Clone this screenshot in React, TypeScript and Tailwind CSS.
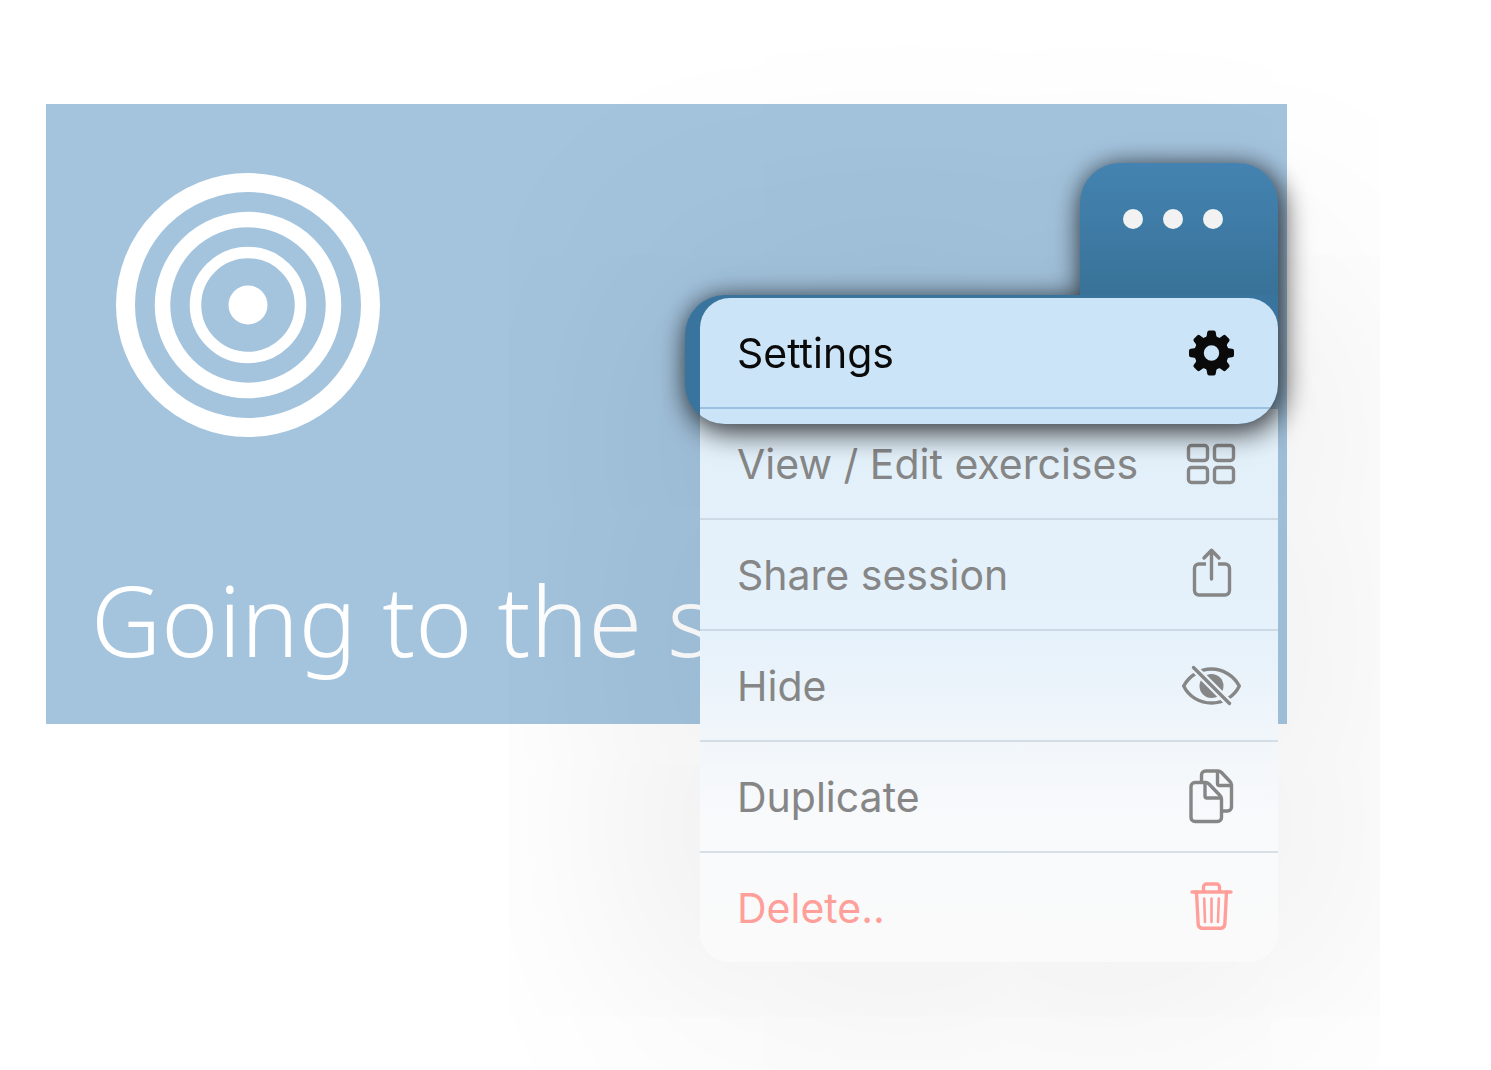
import type { ReactNode } from 'react'

const TEETH = [0, 45, 90, 135, 180, 225, 270, 315]

function Icon({ children }: { children: ReactNode }) {
  return (
    <svg
      className="h-15 w-15 shrink-0"
      viewBox="0 0 60 60"
      fill="none"
      stroke="currentColor"
      strokeWidth="3.4"
      strokeLinecap="round"
      strokeLinejoin="round"
      aria-hidden="true"
    >
      {children}
    </svg>
  )
}

function GearIcon() {
  return (
    <Icon>
      <circle cx="30.5" cy="30" r="12.4" strokeWidth="9.4" />
      {TEETH.map((angle) => (
        <path
          key={angle}
          d="M24.5 15 Q26 13.5 26.2 9.5 Q26.4 7.5 28.2 7.5 H32.8 Q34.6 7.5 34.8 9.5 Q35 13.5 36.5 15 L34 18 H27Z"
          transform={`rotate(${angle} 30.5 30)`}
          fill="currentColor"
          stroke="none"
        />
      ))}
    </Icon>
  )
}

function GridIcon() {
  return (
    <Icon>
      <rect x="7.5" y="11.5" width="19" height="15" rx="3" />
      <rect x="33.5" y="11.5" width="19" height="15" rx="3" />
      <rect x="7.5" y="33.5" width="19" height="15" rx="3" />
      <rect x="33.5" y="33.5" width="19" height="15" rx="3" />
    </Icon>
  )
}

function ShareIcon() {
  return (
    <Icon>
      <path d="M25 19H18a4.5 4.5 0 0 0-4.5 4.5v22A4.5 4.5 0 0 0 18 50h26a4.5 4.5 0 0 0 4.5-4.5v-22A4.5 4.5 0 0 0 44 19h-7" strokeLinecap="butt" />
      <path d="M30.5 34V5.5M23 13l7.5-7.8L38 13" />
    </Icon>
  )
}

function HideIcon() {
  return (
    <Icon>
      <mask id="slash-gap" maskUnits="userSpaceOnUse" x="0" y="0" width="60" height="60">
        <rect width="60" height="60" fill="white" stroke="none" />
        <path d="M6 5L55 54" stroke="black" strokeWidth="8" />
      </mask>
      <g mask="url(#slash-gap)">
        <path d="M2.7 30C8 20 19 13 30.5 13S53 20 58.3 30C53 41 42 47 30.5 47S8 41 2.7 30Z" />
        <circle cx="30.5" cy="30" r="12" fill="currentColor" stroke="none" />
      </g>
      <path d="M12.5 11.5L48.5 47.5" />
    </Icon>
  )
}

function DuplicateIcon() {
  return (
    <Icon>
      <path d="M20.5 14V8a4 4 0 0 1 4-4H37c1.5 0 2.5.5 3.5 1.5l8.5 9c1 1 1.5 2 1.5 3.5V40a4 4 0 0 1-4 4H42" />
      <path d="M36.5 5v11.5a2 2 0 0 0 2 2H50" />
      <path d="M14 15.5h10.5c1.5 0 2.5.5 3.5 1.5l11 11.5c1 1 1.5 2 1.5 3.5v18.5a4 4 0 0 1-4 4H14a4 4 0 0 1-4-4v-31a4 4 0 0 1 4-4Z" />
      <path d="M24 16.5V29a2 2 0 0 0 2 2h14" />
    </Icon>
  )
}

function TrashIcon() {
  return (
    <Icon>
      <path d="M11 14h39M22.5 13.5V9a3 3 0 0 1 3-3h10a3 3 0 0 1 3 3v4.5" />
      <path d="M15.5 14l1.7 32.5a4 4 0 0 0 4 3.7h18.6a4 4 0 0 0 4-3.7L45.5 14" />
      <path d="M23.2 20.5L24 44M30.5 20.5V44M37.8 20.5L37 44" strokeWidth="2.6" />
    </Icon>
  )
}

function Target() {
  return (
    <svg className="h-66 w-66" viewBox="0 0 264 264" fill="none" stroke="white" aria-hidden="true">
      <circle cx="132" cy="132" r="122.5" strokeWidth="19" />
      <circle cx="132" cy="132" r="85.5" strokeWidth="15.5" />
      <circle cx="132" cy="132" r="52.5" strokeWidth="11.5" />
      <circle cx="132" cy="132" r="19.5" fill="white" stroke="none" />
    </svg>
  )
}

interface MenuItem {
  label: string
  icon: ReactNode
  danger?: boolean
}

const items: MenuItem[] = [
  { label: 'View / Edit exercises', icon: <GridIcon /> },
  { label: 'Share session', icon: <ShareIcon /> },
  { label: 'Hide', icon: <HideIcon /> },
  { label: 'Duplicate', icon: <DuplicateIcon /> },
  { label: 'Delete..', icon: <TrashIcon />, danger: true },
]

function SessionMenu() {
  return (
    <div className="absolute top-[59px] right-[9px] flex flex-col items-end text-[41px] leading-[56px]">
      <div className="absolute right-0 bottom-0 h-[664px] w-[578px] rounded-[30px] shadow-[0_0_240px_60px_rgba(0,0,0,0.08)]" />

      {/* opened menu button and the highlighted entry share one outline */}
      <div className="relative z-10 flex flex-col items-end drop-shadow-[0_0_10px_rgba(0,0,0,0.35)]">
        <div className="flex flex-col items-end drop-shadow-[4px_8px_14px_rgba(0,0,0,0.6)]">
          <button
            aria-label="Session options"
            className="flex h-[132px] w-[198px] gap-5 rounded-t-[40px] bg-linear-to-b from-[#4483b1] to-[#387298] pt-[46px] pl-[43px]"
          >
            <span className="h-5 w-5 rounded-full bg-[#f2f2f2]" />
            <span className="h-5 w-5 rounded-full bg-[#f2f2f2]" />
            <span className="h-5 w-5 rounded-full bg-[#f2f2f2]" />
          </button>
          <div className="w-[593px] overflow-hidden rounded-[40px] rounded-tr-none bg-[#38749e] pt-[3px] pl-[15px]">
            <div className="rounded-t-[30px] bg-[#cce4f7] pb-[15px]">
              <button className="flex h-[111px] w-full items-center justify-between border-b-2 border-[#9cc1e0] pr-[37px] pl-[37px] text-[#0a0a0a]">
                Settings
                <GearIcon />
              </button>
            </div>
          </div>
        </div>
      </div>

      <ul className="relative -mt-[15px] w-[578px] overflow-hidden rounded-b-[30px] bg-[linear-gradient(#e2f0fa,#e5f1fb_40%,#f1f6fa_60%,#f9fafc_75%,#fafafa)]">
        {items.map((item) => (
          <li key={item.label} className="border-b-2 border-[#b4c4d0]/50 last:border-b-0">
            <button
              className={`flex h-[109px] w-full items-center justify-between pr-[37px] pl-[37px] ${
                item.danger ? 'text-[#ff9f99]' : 'text-[#868686]'
              }`}
            >
              {item.label}
              {item.icon}
            </button>
          </li>
        ))}
      </ul>
    </div>
  )
}

export default function App() {
  return (
    <div className="min-h-screen bg-white font-['Inter',sans-serif]">
      <main className="mr-[111px] min-h-screen overflow-hidden pt-[104px] pr-[93px] pl-[46px]">
        <section className="relative h-[620px] bg-[#a4c4de]">
          <div className="pt-[69px] pl-[70px]">
            <Target />
          </div>
          <h1 className="mt-[122px] pl-[45px] font-['Noto_Sans',sans-serif] text-[97px] leading-[120px] font-light whitespace-nowrap text-white">
            Going to the s
          </h1>
          <SessionMenu />
        </section>
      </main>
    </div>
  )
}
